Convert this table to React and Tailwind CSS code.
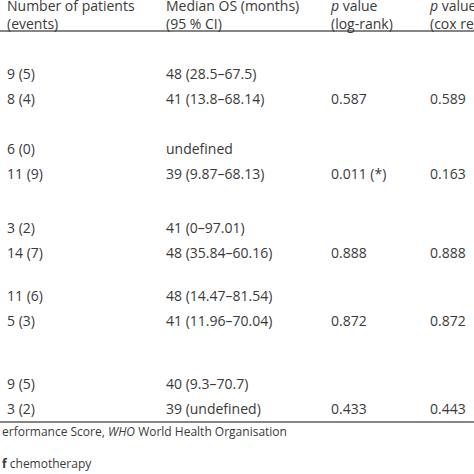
const groups = [
  {
    gap: 'h-[29px]',
    rows: [
      ['9 (5)', '48 (28.5–67.5)', '', ''],
      ['8 (4)', '41 (13.8–68.14)', '0.587', '0.589'],
    ],
  },
  {
    gap: 'h-[25px]',
    rows: [
      ['6 (0)', 'undefined', '', ''],
      ['11 (9)', '39 (9.87–68.13)', '0.011 (*)', '0.163'],
    ],
  },
  {
    gap: 'h-[29px]',
    rows: [
      ['3 (2)', '41 (0–97.01)', '', ''],
      ['14 (7)', '48 (35.84–60.16)', '0.888', '0.888'],
    ],
  },
  {
    gap: 'h-[18px]',
    rows: [
      ['11 (6)', '48 (14.47–81.54)', '', ''],
      ['5 (3)', '41 (11.96–70.04)', '0.872', '0.872'],
    ],
  },
  {
    gap: 'h-[38px]',
    rows: [
      ['9 (5)', '40 (9.3–70.7)', '', ''],
      ['3 (2)', '39 (undefined)', '0.433', '0.443'],
    ],
  },
]

const cols = 'grid grid-cols-[159px_165px_99px_200px] pl-[7px]'

export default function App() {
  return (
    <div className="w-[474px] h-[474px] overflow-hidden bg-white text-[#3a3a3a] text-[14px] font-['Open_Sans',sans-serif]">
      {/* Header */}
      <div className="h-[35px] w-[630px] border-b-2 border-[#858585]">
        <div className={`${cols} -mt-[3px] leading-[18px] whitespace-nowrap`}>
          <div>Number of patients<br />(events)</div>
          <div>Median OS (months)<br />(95 % CI)</div>
          <div><i>p</i> value<br />(log-rank)</div>
          <div><i>p</i> value<br />(cox regression)</div>
        </div>
      </div>

      {/* Body */}
      <div className="w-[630px] border-b-2 border-[#858585]">
        {groups.map((g, gi) => (
          <div key={gi}>
            <div className={g.gap} />
            {g.rows.map((r, ri) => (
              <div key={ri} className={`${cols} h-[25px] items-center whitespace-nowrap`}>
                {r.map((c, ci) => (
                  <div key={ci}>{c}</div>
                ))}
              </div>
            ))}
          </div>
        ))}
      </div>

      {/* Footnotes */}
      <div className="pl-[2px] text-[12px] leading-[16px] pt-[1px] whitespace-nowrap">
        erformance Score, <i>WHO</i> World Health Organisation
      </div>
      <div className="pl-[2px] text-[12px] leading-[16px] mt-[16px] whitespace-nowrap">
        <b>f</b> chemotherapy
      </div>
    </div>
  )
}
